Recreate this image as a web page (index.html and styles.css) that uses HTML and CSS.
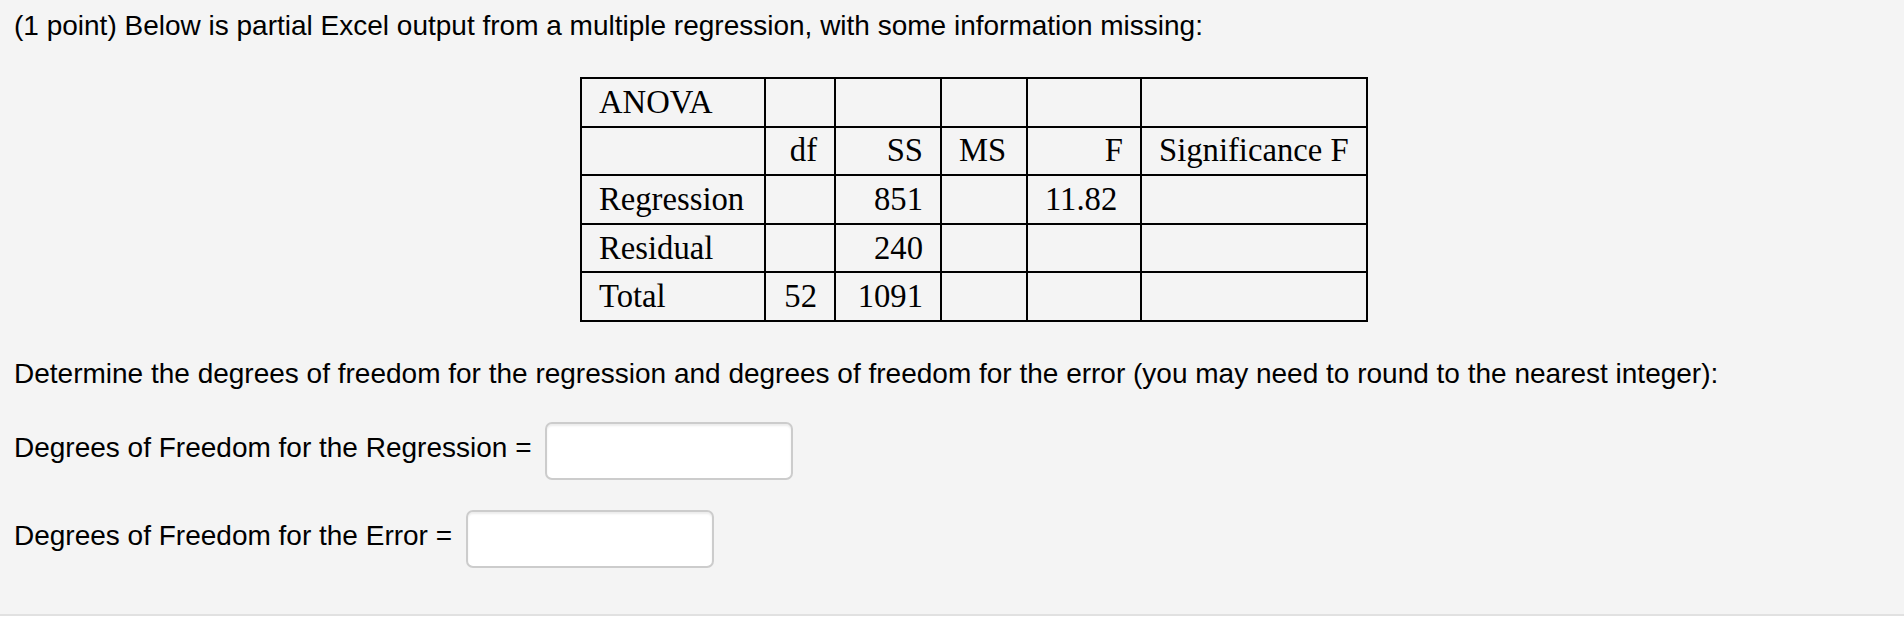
FILE: index.html
```html
<!DOCTYPE html>
<html>
<head>
<meta charset="utf-8">
<link rel="stylesheet" href="styles.css">
</head>
<body>
<div class="problem">
  <p class="intro">(1 point) Below is partial Excel output from a multiple regression, with some information missing:</p>
  <table class="anova">
    <colgroup>
      <col class="c1"><col class="c2"><col class="c3"><col class="c4"><col class="c5"><col class="c6">
    </colgroup>
    <tr><td>ANOVA</td><td></td><td></td><td></td><td></td><td></td></tr>
    <tr><td></td><td class="r">df</td><td class="r">SS</td><td>MS</td><td class="r">F</td><td>Significance F</td></tr>
    <tr><td>Regression</td><td></td><td class="r">851</td><td></td><td>11.82</td><td></td></tr>
    <tr><td>Residual</td><td></td><td class="r">240</td><td></td><td></td><td></td></tr>
    <tr><td>Total</td><td class="r">52</td><td class="r">1091</td><td></td><td></td><td></td></tr>
  </table>
  <p class="question">Determine the degrees of freedom for the regression and degrees of freedom for the error (you may need to round to the nearest integer):</p>
  <div class="answer-row first">
    <span class="label">Degrees of Freedom for the Regression =</span>
    <input class="answer" type="text">
  </div>
  <div class="answer-row">
    <span class="label">Degrees of Freedom for the Error =</span>
    <input class="answer" type="text">
  </div>
</div>
</body>
</html>
```

FILE: styles.css
```css
html, body {
  margin: 0;
  padding: 0;
  background: #ffffff;
}

.problem {
  background: #f4f4f4;
  border-bottom: 2px solid #e1e1e1;
  padding: 10px 14px 46px 14px;
  font-family: "Liberation Sans", Arial, Helvetica, sans-serif;
  font-size: 28px;
  line-height: 32px;
  color: #000;
}

.intro {
  margin: 0;
}

.anova {
  margin: 35px 0 0 566px;
  border-collapse: collapse;
  table-layout: fixed;
  width: 786px;
  font-family: "Liberation Serif", "Times New Roman", Times, serif;
  font-size: 32.67px;
  line-height: normal;
}

.anova col.c1 { width: 184px; }
.anova col.c2 { width: 70px; }
.anova col.c3 { width: 106px; }
.anova col.c4 { width: 86px; }
.anova col.c5 { width: 114px; }
.anova col.c6 { width: 226px; }

.anova td {
  border: 2px solid #000;
  padding: 0 17px;
  height: 48.6px;
  box-sizing: border-box;
  white-space: nowrap;
  text-align: left;
  vertical-align: middle;
}

.anova td.r {
  text-align: right;
}

.question {
  margin: 36px 0 0 0;
}

.answer-row {
  display: flex;
  align-items: center;
  margin-top: 30px;
}

.answer-row.first {
  margin-top: 32px;
}

.label {
  padding-bottom: 6px;
  white-space: pre;
}

.answer {
  margin-left: 14px;
  width: 248px;
  height: 58px;
  box-sizing: border-box;
  background: #ffffff;
  border: 2px solid #cccccc;
  border-radius: 7px;
  box-shadow: inset 0 2px 2px rgba(0, 0, 0, 0.075);
  font-size: 28px;
  padding: 4px 10px;
  outline: none;
}
```
